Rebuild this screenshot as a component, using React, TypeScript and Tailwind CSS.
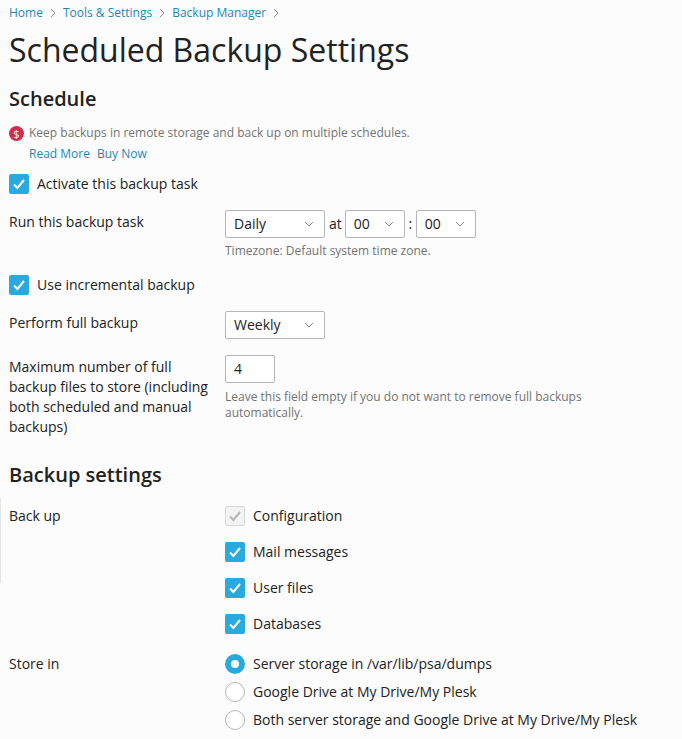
import React from "react";

const Chevron = () => (
    <svg width="8" height="10" viewBox="0 0 8 10" fill="none" stroke="#8a8a8a" strokeWidth="1" className="mx-[6px]">
        <path d="M2 1l4 4-4 4" />
    </svg>
);

const Check = ({ color = "#fff" }: { color?: string }) => (
    <svg width="14" height="12" viewBox="0 0 14 12" fill="none" stroke={color} strokeWidth="2">
        <path d="M2 6.5l3.4 3.5L12 2" />
    </svg>
);

function Checkbox({ label, disabled }: { label: string; disabled?: boolean }) {
    return (
        <div className="flex items-center h-5">
            {disabled ? (
                <span className="w-5 h-5 rounded-[2px] border border-[#d9d9d9] bg-[#f3f3f3] flex items-center justify-center">
                    <Check color="#b5b5b5" />
                </span>
            ) : (
                <span className="w-5 h-5 rounded-[2px] bg-[#28aade] flex items-center justify-center">
                    <Check />
                </span>
            )}
            <span className="ml-2 text-[#222]">{label}</span>
        </div>
    );
}

function Radio({ label, checked }: { label: string; checked?: boolean }) {
    return (
        <div className="flex items-center h-5">
            {checked ? (
                <span className="w-5 h-5 rounded-full bg-[#28aade] flex items-center justify-center">
                    <span className="w-2 h-2 rounded-full bg-white"></span>
                </span>
            ) : (
                <span className="w-5 h-5 rounded-full border border-[#b5b5b5] bg-white"></span>
            )}
            <span className="ml-2 text-[#222]">{label}</span>
        </div>
    );
}

function Select({ value, width }: { value: string; width: string }) {
    return (
        <div className={`${width} h-7 border border-[#b5b5b5] rounded-[2px] bg-white flex items-center justify-between pl-[8px] pr-[10px] text-[#222]`}>
            <span>{value}</span>
            <svg width="10" height="6" viewBox="0 0 10 6" fill="none" stroke="#8a8a8a" strokeWidth="1">
                <path d="M1 1l4 4 4-4" />
            </svg>
        </div>
    );
}

export default function App() {
    return (
        <div className="relative w-[682px] h-[739px] overflow-hidden bg-[#fcfcfc] text-[14px] leading-5 text-[#222] font-['Open_Sans',sans-serif]">
            <div className="absolute left-0 top-[498px] w-px h-[85px] bg-[#e5e5e5]"></div>
            <div className="px-[9px]">
                {/* Breadcrumbs */}
                <div className="flex items-center h-[16px] mt-[5px] text-[12px] leading-4 text-[#1c87b8]">
                    <span>Home</span>
                    <Chevron />
                    <span>Tools &amp; Settings</span>
                    <Chevron />
                    <span>Backup Manager</span>
                    <Chevron />
                </div>

                <h1 className="text-[32px] leading-10 mt-[9px] text-[#222]">Scheduled Backup Settings</h1>

                <h2 className="text-[20px] leading-6 font-semibold mt-[17px] text-[#222]">Schedule</h2>

                {/* Upsell notice */}
                <div className="mt-[14px] text-[12px] leading-4">
                    <div className="flex items-center">
                        <span className="w-[15px] h-[15px] rounded-full bg-[#d02d4f] text-white text-[11px] leading-[15px] text-center mr-[5px]">$</span>
                        <span className="text-[#737373]">Keep backups in remote storage and back up on multiple schedules.</span>
                    </div>
                    <div className="ml-5 mt-[5px] text-[#1c87b8]">
                        <span>Read More</span>
                        <span className="ml-[7px]">Buy Now</span>
                    </div>
                </div>

                <div className="mt-3">
                    <Checkbox label="Activate this backup task" />
                </div>

                {/* Run this backup task */}
                <div className="flex mt-4">
                    <div className="w-[216px] pt-[2px]">Run this backup task</div>
                    <div>
                        <div className="flex items-center">
                            <Select value="Daily" width="w-[100px]" />
                            <span className="ml-1 mr-[3px]">at</span>
                            <Select value="00" width="w-[60px]" />
                            <span className="w-[11px] text-center">:</span>
                            <Select value="00" width="w-[60px]" />
                        </div>
                        <div className="text-[12px] leading-4 text-[#737373] mt-[5px]">Timezone: Default system time zone.</div>
                    </div>
                </div>

                <div className="mt-4">
                    <Checkbox label="Use incremental backup" />
                </div>

                <div className="flex mt-4">
                    <div className="w-[216px] pt-[2px]">Perform full backup</div>
                    <Select value="Weekly" width="w-[100px]" />
                </div>

                <div className="flex mt-4">
                    <div className="w-[216px] pr-2 pt-[2px]">
                        Maximum number of full backup files to store (including both scheduled and manual backups)
                    </div>
                    <div className="flex-1">
                        <div className="w-[50px] h-7 border border-[#b5b5b5] rounded-[2px] bg-white flex items-center pl-[8px]">4</div>
                        <div className="text-[12px] leading-4 text-[#737373] mt-[6px] w-[380px]">
                            Leave this field empty if you do not want to remove full backups automatically.
                        </div>
                    </div>
                </div>

                <h2 className="text-[20px] leading-6 font-semibold mt-[26px] text-[#222]">Backup settings</h2>

                <div className="flex mt-[19px]">
                    <div className="w-[216px]">Back up</div>
                    <div className="flex flex-col gap-4">
                        <Checkbox label="Configuration" disabled />
                        <Checkbox label="Mail messages" />
                        <Checkbox label="User files" />
                        <Checkbox label="Databases" />
                    </div>
                </div>

                <div className="flex mt-5">
                    <div className="w-[216px]">Store in</div>
                    <div className="flex flex-col gap-2">
                        <Radio label="Server storage in /var/lib/psa/dumps" checked />
                        <Radio label="Google Drive at My Drive/My Plesk" />
                        <Radio label="Both server storage and Google Drive at My Drive/My Plesk" />
                    </div>
                </div>
            </div>
        </div>
    );
}
